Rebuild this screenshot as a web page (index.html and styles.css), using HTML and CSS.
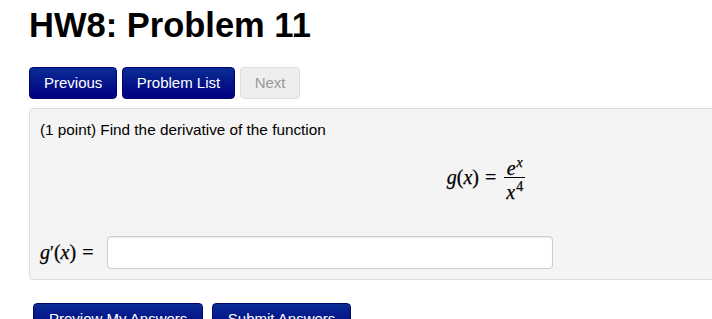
FILE: index.html
```html
<!DOCTYPE html>
<html>
<head>
<meta charset="utf-8">
<link rel="stylesheet" href="styles.css">
</head>
<body>
<div class="page">
  <h1 class="title">HW8: Problem 11</h1>
  <div class="nav">
    <a class="btn btn-primary">Previous</a>
    <a class="btn btn-primary">Problem List</a>
    <a class="btn btn-disabled">Next</a>
  </div>
  <div class="problem">
    <p class="prompt">(1 point) Find the derivative of the function</p>
    <div class="display">
      <span class="math"><span class="mi">g</span><span class="mo">(</span><span class="mi">x</span><span class="mo">)</span><span class="rel">=</span><span class="frac"><span class="num"><span class="mi">e</span><span class="sup mi">x</span></span><span class="den"><span class="mi">x</span><span class="sup">4</span></span></span></span>
    </div>
    <div class="answer">
      <span class="math"><span class="mi">g</span><span class="mo prime">′</span><span class="mo">(</span><span class="mi">x</span><span class="mo">)</span><span class="rel">=</span></span>
      <input class="answer-input" type="text">
    </div>
  </div>
  <div class="submit-row">
    <a class="btn btn-primary btn-wide">Preview My Answers</a>
    <a class="btn btn-primary btn-wide">Submit Answers</a>
  </div>
</div>
</body>
</html>
```

FILE: styles.css
```css
html, body {
  margin: 0;
  padding: 0;
  overflow: hidden;
  background: #ffffff;
}
body {
  font-family: "Liberation Sans", Arial, sans-serif;
  color: #000;
}
.page {
  padding-left: 29px;
  width: 1000px;
}
.title {
  margin: 5px 0 0 0;
  font-size: 34.5px;
  line-height: 40px;
  font-weight: bold;
  color: #000;
}
.nav {
  margin-top: 22px;
  height: 32px;
}
.btn {
  display: inline-block;
  box-sizing: border-box;
  height: 32px;
  padding: 5px 14px;
  font-size: 15px;
  line-height: 20px;
  border-radius: 4px;
  border: 1px solid transparent;
  text-decoration: none;
  vertical-align: top;
}
.btn-wide {
  padding: 5px 15px;
}
.btn-primary {
  color: #ffffff;
  background: linear-gradient(to bottom, #0a2c94, #000080);
  border-color: #00066e;
}
.btn-disabled {
  color: #999999;
  background: #eeeeee;
  border-color: #dddddd;
}
.problem {
  margin-top: 9px;
  width: 914px;
  box-sizing: border-box;
  background: #f4f4f4;
  border: 1px solid #dddddd;
  border-radius: 4px;
  padding: 11px 10px 9px 10px;
  height: 172px;
}
.prompt {
  margin: 0;
  font-size: 15.3px;
  line-height: 20px;
  color: #000;
}
.display {
  text-align: center;
  margin-top: 19px;
  height: 68px;
  line-height: 22px;
}
.math {
  font-family: "Liberation Serif", "Times New Roman", serif;
  font-size: 20px;
  color: #000;
  white-space: nowrap;
  -webkit-text-stroke: 0.25px #000;
}
.mi {
  font-style: italic;
}
.mo {
  font-style: normal;
}
.rel {
  margin: 0 6px;
}
.frac {
  display: inline-flex;
  flex-direction: column;
  vertical-align: 9px;
  text-align: center;
  margin-left: 2px;
}
.num {
  display: block;
  line-height: 18px;
  padding: 0 2px 0 2px;
}
.den {
  display: block;
  line-height: 18px;
  border-top: 1.5px solid #000;
  padding: 5px 2px 0 2px;
}
.sup {
  font-size: 14px;
  vertical-align: 8px;
  line-height: 0;
  margin-left: 1px;
}
.prime {
  font-size: 18px;
}
.answer {
  display: flex;
  align-items: center;
  margin-top: 9px;
}
.answer .rel {
  margin-right: 0;
}
.answer-input {
  margin-left: 14px;
  width: 446px;
  height: 33px;
  box-sizing: border-box;
  border: 1px solid #cccccc;
  border-radius: 4px;
  background: #ffffff;
  box-shadow: inset 0 1px 1px rgba(0,0,0,0.075);
  padding: 4px 6px;
  font-size: 14px;
}
.submit-row {
  margin-top: 23px;
  margin-left: 4px;
}
.submit-row .btn + .btn {
  margin-left: 4px;
}
```
